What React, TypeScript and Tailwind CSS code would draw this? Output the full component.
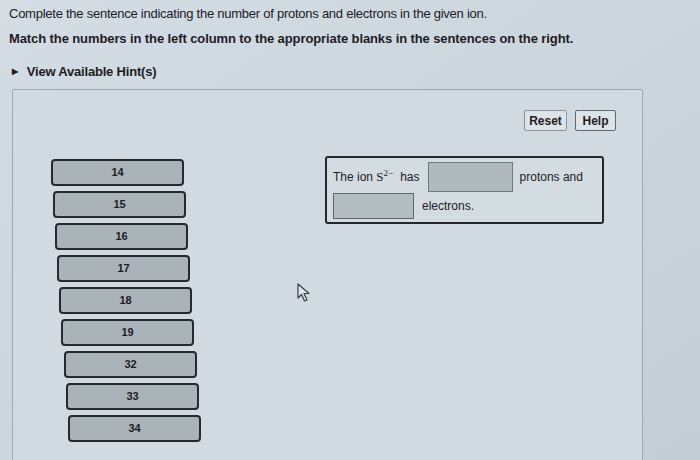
import React from 'react';

const tiles = [
  { n: '14', ml: 'ml-[0px]' },
  { n: '15', ml: 'ml-[2px]' },
  { n: '16', ml: 'ml-[4px]' },
  { n: '17', ml: 'ml-[6px]' },
  { n: '18', ml: 'ml-[8px]' },
  { n: '19', ml: 'ml-[10px]' },
  { n: '32', ml: 'ml-[13px]' },
  { n: '33', ml: 'ml-[15px]' },
  { n: '34', ml: 'ml-[17px]' },
];

function Cursor() {
  return (
    <svg className="absolute left-[284px] top-[193px]" width="16" height="20" viewBox="0 0 16 20">
      <path
        d="M1 1 L1 15 L4.5 11.5 L7.5 18 L10 17 L7 10.5 L12 10.5 Z"
        fill="#dfe6ea"
        stroke="#3a4044"
        strokeWidth="1.2"
        strokeLinejoin="round"
      />
    </svg>
  );
}

export default function App() {
  return (
    <div
      className="w-[700px] h-[460px] overflow-hidden bg-gradient-to-br from-[#d3dde3] via-[#cbd6dd] to-[#c2cdd4] text-[#1c2024]"
      style={{ fontFamily: '"Liberation Sans", Arial, sans-serif' }}
    >
      {/* instructions */}
      <div className="pl-[9px] pt-[5px]">
        <p className="text-[13px] leading-[17px] tracking-[-0.25px]">
          Complete the sentence indicating the number of protons and electrons in the given ion.
        </p>
        <p className="mt-[8px] text-[13px] leading-[17px] font-bold tracking-[-0.1px]">
          Match the numbers in the left column to the appropriate blanks in the sentences on the right.
        </p>
        <div className="mt-[16px] flex items-center gap-[9px] pl-[3px] text-[13px] leading-[17px] font-bold tracking-[-0.2px]">
          <span className="text-[8px]">▶</span>
          <span>View Available Hint(s)</span>
        </div>
      </div>

      {/* activity panel */}
      <div className="relative ml-[12px] mt-[9px] w-[631px] h-[400px] border border-[#9ea9af] rounded-[2px] bg-[#d0dae0]">
        <div className="flex justify-end gap-[8px] pt-[20px] pr-[26px]">
          <button className="h-[21px] w-[43px] border border-[#8c969b] rounded-[2px] bg-[#dde4e8] text-[12px] font-bold">
            Reset
          </button>
          <button className="h-[21px] w-[41px] border border-[#5c6a74] rounded-[2px] bg-[#dde4e8] text-[12px] font-bold">
            Help
          </button>
        </div>

        <div className="flex items-start mt-[25px]">
          {/* number tiles */}
          <div className="flex flex-col gap-[5px] pl-[38px] pt-[3px]">
            {tiles.map((t) => (
              <div
                key={t.n}
                className={`${t.ml} h-[27px] w-[133px] border-2 border-[#262a2c] rounded-[4px] bg-[#aab4b8] flex items-center justify-center text-[11px] font-bold`}
              >
                {t.n}
              </div>
            ))}
          </div>

          {/* sentence */}
          <div className="ml-[124px] w-[279px] h-[68px] border-2 border-[#24282a] rounded-[3px] bg-[#d3dce1] px-[6px] pt-[3px] text-[12px]">
            <div className="flex items-center h-[31px]">
              <span>The ion&nbsp;</span>
              <span style={{ fontFamily: '"Liberation Serif", "Times New Roman", serif' }} className="text-[13px]">
                S<sup className="text-[9px]">2−</sup>
              </span>
              <span className="ml-[7px]">has</span>
              <div className="ml-[8px] h-[30px] w-[85px] border border-[#6f797e] bg-[#b0babe]" />
              <span className="ml-[7px]">protons and</span>
            </div>
            <div className="flex items-center h-[27px]">
              <div className="h-[26px] w-[81px] border border-[#5f696e] bg-[#b3bcc0]" />
              <span className="ml-[8px]">electrons.</span>
            </div>
          </div>
        </div>

        <Cursor />
      </div>
    </div>
  );
}
